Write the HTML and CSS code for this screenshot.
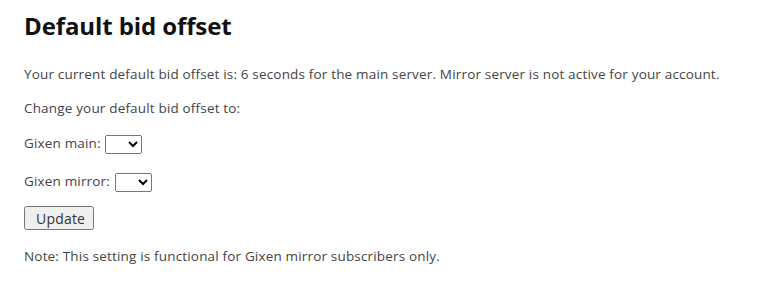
FILE: index.html
```html
<!DOCTYPE html>
<html>
<head>
<meta charset="utf-8">
<link rel="stylesheet" href="styles.css">
</head>
<body>
<div class="page">
  <h1 class="title">Default bid offset</h1>
  <p class="text">Your current default bid offset is: 6 seconds for the main server. Mirror server is not active for your account.</p>
  <p class="text">Change your default bid offset to:</p>
  <form class="form">
    <p class="row">Gixen main: <select class="sel"><option></option></select></p>
    <p class="row row-mirror">Gixen mirror: <select class="sel"><option></option></select></p>
    <p class="row row-btn"><button type="button" class="btn">Update</button></p>
  </form>
  <p class="text">Note: This setting is functional for Gixen mirror subscribers only.</p>
</div>
</body>
</html>
```
FILE: styles.css
```css
html, body { margin: 0; padding: 0; background: #fff; }
.page {
  padding: 12px 24px 0;
  font-family: "Open Sans", sans-serif;
  font-size: 13.5px;
  letter-spacing: 0.17px;
  color: #444;
}
.title {
  margin: 0 0 24px;
  font-size: 24px;
  font-weight: 700;
  letter-spacing: -0.1px;
  color: #111;
  line-height: 28px;
}
.text { margin: 0 0 14px; line-height: 20px; }
.row { margin: 0 0 16px; line-height: 22px; height: 22px; }
.row-mirror { margin-bottom: 14px; }
.row-btn { margin-bottom: 18px; }
.sel {
  width: 37px;
  height: 19px;
  vertical-align: middle;
  font-size: 12px;
  margin-left: 1px;
}
.btn {
  font-family: "Open Sans", sans-serif;
  font-size: 14px;
  letter-spacing: 0.2px;
  color: #333;
  padding: 1px 10px;
  height: 24px;
  width: 70px;
  vertical-align: top;
}
```
